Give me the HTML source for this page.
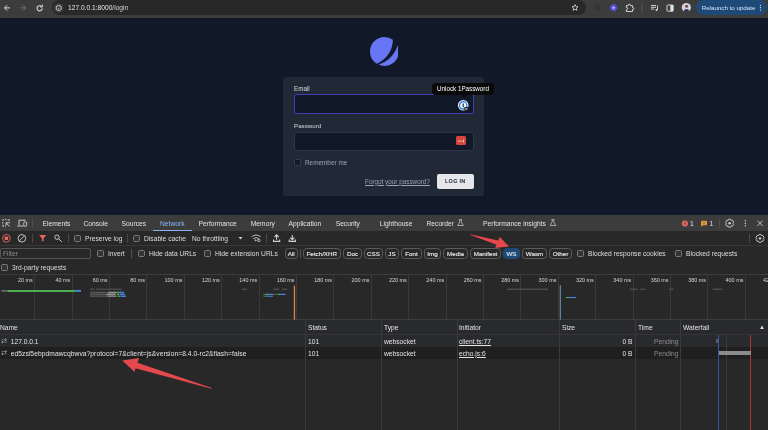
<!DOCTYPE html>
<html><head><meta charset="utf-8">
<style>
*{box-sizing:border-box;margin:0;padding:0}
html,body{width:768px;height:430px;overflow:hidden;background:#111827;font-family:"Liberation Sans",sans-serif;}
.a{position:absolute}
.t{position:absolute;white-space:nowrap;line-height:1}
#chrome{left:0;top:0;width:768px;height:17.700px;background:#3c3c3c}
#omni{left:51.500px;top:-0.500px;width:534.500px;height:15.200px;border-radius:7.600px;background:#282828}
#page{left:0;top:17.700px;width:768px;height:197.300px;background:#111827}
#card{left:283px;top:77px;width:201px;height:119px;border-radius:3px;background:#212937}
.inp{left:294px;width:180px;height:19px;border-radius:2px;background:#111827;border:1px solid #2b3544}
#dt{left:0;top:215px;width:768px;height:215px;background:#282828}
#tabs{left:0;top:215px;width:768px;height:16px;background:#3c3c3c}
.tab{font-size:6.700px;color:#e3e3e3;top:220.500px}
.lbl{font-size:6.700px;color:#dedede}
.cb{position:absolute;width:7.400px;height:7.200px;border:1px solid #7a7a7a;border-radius:1.600px;background:#333;margin-left:-0.700px}
.pill{position:absolute;top:248.200px;height:10.400px;border:1px solid #5c5c5c;border-radius:3.500px;font-size:6.250px;font-weight:normal;-webkit-text-stroke:0.150px #e6e6e6;color:#e6e6e6;text-align:center;line-height:9.100px}
.tick{font-size:5.450px;color:#d8d8d8;top:278.200px;text-align:right;width:36px}
.vl{position:absolute;top:274px;height:45px;width:1px;background:#393939}
.cell{font-size:6.700px;color:#e3e3e3}
#root{position:absolute;left:0;top:0;width:768px;height:430px;will-change:transform}
</style></head><body><div id="root">
<div class="a" id="chrome"></div>
<div class="a" id="omni"></div>
<div class="t" style="left:68px;top:4.5px;font-size:6.65px;color:#e8e8e8">127.0.0.1<span style="color:#e8e8e8">:8000</span><span style="color:#cfcfcf">/login</span></div>
<div class="a" style="left:696.300px;top:0.300px;width:70.500px;height:14.800px;border-radius:7.400px;background:#1f4a78"></div>
<div class="t" style="left:701.700px;top:4.500px;font-size:6.200px;color:#d6e6fb">Relaunch to update</div>


<svg class="a" style="left:0;top:-0.400px" width="768" height="18" viewBox="0 0 768 18">
 <g fill="none" stroke="#d8d8d8" stroke-width="0.9" stroke-linecap="round" stroke-linejoin="round">
  <path d="M9.600 7.900h-4.600M6.900 5.500l-2.400 2.400 2.400 2.400" stroke-width="1"/>
  <path d="M20.600 7.900h4.600M23.300 5.500l2.400 2.400-2.400 2.400" stroke="#707070" stroke-width="1"/>
  <path d="M41.700 6.700a2.600 2.600 0 1 0 .5 2" stroke-width="1.100"/><path d="M42.300 5v1.900h-1.900" stroke-width="1"/>
 </g>
 <circle cx="58.700" cy="7.950" r="5" fill="#3c3c3c"/>
 <circle cx="58.700" cy="7.950" r="2.600" fill="none" stroke="#e0e0e0" stroke-width="0.8"/><path d="M58.700 6.750v0.300M58.700 7.750v1.600" stroke="#e0e0e0" stroke-width="0.7"/>
 <path d="M575 4.600l.9 2 2.100.2-1.600 1.400.5 2.100-1.900-1.100-1.900 1.100.5-2.100-1.600-1.400 2.100-.2z" fill="none" stroke="#e0e0e0" stroke-width="0.8" stroke-linejoin="round"/>
 <circle cx="597.200" cy="7.600" r="3.300" fill="#363636"/>
 <circle cx="613.600" cy="7.800" r="3" fill="#5a55ea"/><circle cx="613.600" cy="7.800" r="3.300" fill="none" stroke="#5a55ea" stroke-width="1" stroke-dasharray="1.400 1.192"/><circle cx="613.600" cy="7.800" r="1.100" fill="#cfcdfa"/>
 <path d="M626.300 5.600h2.100v-.4a1 1 0 0 1 2 0v.4h2.100v1.900h.3a1 1 0 0 1 0 2h-.3v2h-6.200v-2h.4a1 1 0 0 0 0-2h-.4z" fill="none" stroke="#e0e0e0" stroke-width="0.900" stroke-linejoin="round"/>
 <rect x="641.500" y="4" width="0.700" height="8" fill="#666"/>
 <path d="M651 5.500h5M651 7.300h5M651 9.100h3M657.500 5.500v4.300" stroke="#e0e0e0" stroke-width="0.9" fill="none"/><circle cx="656.500" cy="10" r="1" fill="#e0e0e0"/>
 <rect x="667" y="5" width="6.200" height="6.200" rx="0.800" fill="none" stroke="#e0e0e0" stroke-width="0.900"/><rect x="670.300" y="5" width="2.900" height="6.200" fill="#e0e0e0"/>
 <circle cx="686.300" cy="7.600" r="4.600" fill="#d6d2dc"/><circle cx="686.600" cy="6.200" r="1.500" fill="#6b5048"/><path d="M683.500 11.200a3.200 3.200 0 0 1 6 0 4.600 4.600 0 0 1-6 0z" fill="#2f3a55"/>
 <circle cx="760.500" cy="5.300" r="0.650" fill="#d6e6fb"/><circle cx="760.500" cy="7.700" r="0.650" fill="#d6e6fb"/><circle cx="760.500" cy="10.100" r="0.650" fill="#d6e6fb"/>
</svg>
<div class="a" id="page"></div>
<svg class="a" style="left:369.600px;top:37.150px" width="28.900" height="28.900" viewBox="0 0 48 48"><path d="M11.395 44.428C4.557 40.198 0 32.632 0 24 0 10.745 10.745 0 24 0a23.891 23.891 0 0113.997 4.502c-.2 17.907-11.097 33.245-26.602 39.926z" fill="#6875F5"/><path d="M14.134 45.885A23.914 23.914 0 0024 48c13.255 0 24-10.745 24-24 0-3.516-.756-6.856-2.115-9.866-4.659 15.143-16.608 27.092-31.750 31.751z" fill="#6875F5"/></svg>
<div class="a" id="card"></div>
<div class="t" style="left:294px;top:85.500px;font-size:6.300px;color:#d6d9de">Email</div>
<div class="a inp" style="top:94.400px;height:19.200px;border:1.300px solid #433eb8"></div>
<div class="t" style="left:294px;top:122.500px;font-size:6.200px;color:#d6d9de">Password</div>
<div class="a inp" style="top:132px"></div>
<div class="cb" style="left:294.500px;top:158.500px;width:7px;height:7px;background:#111827;border-color:#374151"></div>
<div class="t" style="left:305px;top:159.500px;font-size:6.400px;color:#9ca3af">Remember me</div>
<div class="t" style="left:365px;top:178.500px;font-size:6.350px;color:#9ca3af;text-decoration:underline">Forgot your password?</div>
<div class="a" style="left:437px;top:174px;width:37px;height:15px;border-radius:2px;background:#e5e7eb"></div>
<div class="t" style="left:445px;top:179px;font-size:5.500px;font-weight:bold;color:#1f2937;letter-spacing:0.250px">LOG IN</div>
<div class="a" style="left:431.500px;top:83px;width:62.500px;height:12.300px;border-radius:4px;background:#0a0a0a"></div><div class="a" style="left:462.300px;top:93.300px;width:4px;height:4px;background:#0a0a0a;transform:rotate(45deg)"></div>
<div class="t" style="left:437px;top:86px;font-size:6.270px;color:#fff">Unlock 1Password</div>
<svg class="a" style="left:457px;top:98.500px" width="13" height="13" viewBox="0 0 13 13"><circle cx="6.200" cy="6.300" r="5.300" fill="#f2f5fa"/><circle cx="6.200" cy="6.300" r="3.700" fill="none" stroke="#2f7be0" stroke-width="1.300"/><rect x="5.600" y="4.300" width="1.200" height="4" rx="0.600" fill="#1a2a44"/><rect x="7.300" y="8" width="4" height="3.500" rx="0.700" fill="#2a2d33"/><rect x="8.300" y="9.300" width="2" height="1.200" fill="#cfd3da"/></svg>
<div class="a" style="left:456.300px;top:136.300px;width:9.400px;height:9.200px;border-radius:1.500px;background:#d6453b"></div><svg class="a" style="left:456px;top:136px" width="10" height="10" viewBox="0 0 10 10"><circle cx="2.600" cy="5" r="0.600" fill="#fff"/><circle cx="4.300" cy="5" r="0.600" fill="#fff"/><circle cx="6" cy="5" r="0.600" fill="#fff"/><rect x="7.200" y="3.500" width="0.600" height="3" fill="#fff"/></svg>

<div class="a" id="dt"></div>
<div class="a" id="tabs"></div>
<div class="t tab" style="left:42.500px">Elements</div>
<div class="t tab" style="left:83.400px">Console</div>
<div class="t tab" style="left:121.600px">Sources</div>
<div class="t tab" style="left:160px;color:#8ab4f8">Network</div>
<div class="a" style="left:153px;top:229.800px;width:39px;height:1.200px;background:#8ab4f8"></div>
<div class="t tab" style="left:198.500px">Performance</div>
<div class="t tab" style="left:250.800px">Memory</div>
<div class="t tab" style="left:288.500px">Application</div>
<div class="t tab" style="left:335.700px">Security</div>
<div class="t tab" style="left:379.700px">Lighthouse</div>
<div class="t tab" style="left:426.500px">Recorder</div>
<div class="t tab" style="left:483px">Performance insights</div>
<div class="t tab" style="left:690px">1</div>
<div class="t tab" style="left:709.500px">1</div>

<!-- toolbar row -->
<div class="a" style="left:0;top:245px;width:768px;height:1px;background:#383838"></div>
<svg class="a" style="left:0;top:215px" width="768" height="60" viewBox="0 215 768 60">
 <g fill="none" stroke="#cfcfcf" stroke-width="0.900">
  <path d="M2.800 219.700h1.200M5 219.700h1.600M7.600 219.700h1.700v1.200M9.300 222v1.200M2.800 219.700v1.200M2.800 222v1.600M2.800 224.600v1.600h1.200M5 226.200h1"/>
  <path d="M9.600 226.400l-3.400-3.400M6 225.500v-2.700h2.700" stroke-width="1"/>
  <path d="M19 225v-4.800h6.500M17.300 226h6.200" stroke-width="1"/><rect x="23.800" y="222" width="2.900" height="4.200" rx="0.600" stroke-width="0.900"/>
 </g>
 <rect x="32" y="218.600" width="0.800" height="9" fill="#525252"/>
 <circle cx="6.400" cy="238.300" r="3.900" fill="none" stroke="#e46962" stroke-width="0.900"/><rect x="4.600" y="236.500" width="3.600" height="3.600" rx="0.800" fill="#e46962"/>
 <circle cx="21.900" cy="238.300" r="3.800" fill="none" stroke="#d0d0d0" stroke-width="0.900"/><path d="M19.300 240.900l5.200-5.200" stroke="#d0d0d0" stroke-width="0.900"/>
 <rect x="32" y="234" width="0.800" height="8.700" fill="#525252"/>
 <path d="M39.200 235.100h7.100l-2.800 3.300v2.900h-1.500v-2.900z" fill="#e46962"/>
 <circle cx="57" cy="237.200" r="2.200" fill="none" stroke="#d0d0d0" stroke-width="0.900"/><path d="M58.600 238.800l3.200 3" stroke="#d0d0d0" stroke-width="1"/>
 <rect x="68.200" y="234" width="0.800" height="8.700" fill="#525252"/>
 <rect x="127.300" y="234" width="0.800" height="8.700" fill="#525252"/>
 <path d="M238.500 236.900h4l-2 2.600z" fill="#d0d0d0"/>
 <g fill="none" stroke="#d0d0d0" stroke-width="0.900"><path d="M251.600 236.800q4.500-3.600 9 0M253.300 238.700q2.800-2.200 5.600 0"/><circle cx="255.700" cy="240.300" r="0.500" fill="#d0d0d0"/><circle cx="258.800" cy="240.400" r="1.200"/></g>
 <rect x="266" y="234" width="0.800" height="8.700" fill="#525252"/>
 <g fill="none" stroke="#d0d0d0" stroke-width="1.100"><path d="M276.600 239.800v-4.800M274.500 237l2.100-2.100 2.100 2.100M273.500 239.600v1.800h6.200v-1.800"/><path d="M292.300 234.900v4.800M290.200 237.700l2.100 2.100 2.100-2.100M289.200 239.600v1.800h6.200v-1.800"/></g>
 <rect x="749.200" y="234" width="0.800" height="8.700" fill="#525252"/>
 <polygon points="761.06,234.44 758.94,234.44 758.40,235.63 757.10,235.50 756.04,237.34 756.80,238.40 756.04,239.46 757.10,241.30 758.40,241.17 758.94,242.36 761.06,242.36 761.60,241.17 762.90,241.30 763.96,239.46 763.20,238.40 763.96,237.34 762.90,235.50 761.60,235.63" fill="none" stroke="#d0d0d0" stroke-width="0.900" stroke-linejoin="round"/><circle cx="760" cy="238.4" r="1.200" fill="#d0d0d0"/>
 <circle cx="684.900" cy="223.500" r="3.100" fill="#e46962"/><path d="M683.700 222.300l2.400 2.400M686.100 222.300l-2.400 2.400" stroke="#3c3c3c" stroke-width="0.700"/>
 <path d="M701 220.700h6v4.500h-3.700l-2.300 1.600z" fill="#e8933d"/><rect x="703.700" y="221.700" width="0.600" height="1.600" fill="#3c3c3c"/><rect x="703.700" y="223.700" width="0.600" height="0.600" fill="#3c3c3c"/>
 <rect x="719.200" y="219" width="0.800" height="8.500" fill="#525252"/>
 <polygon points="730.66,219.24 728.54,219.24 728.00,220.43 726.70,220.30 725.64,222.14 726.40,223.20 725.64,224.26 726.70,226.10 728.00,225.97 728.54,227.16 730.66,227.16 731.20,225.97 732.50,226.10 733.56,224.26 732.80,223.20 733.56,222.14 732.50,220.30 731.20,220.43" fill="none" stroke="#d0d0d0" stroke-width="0.900" stroke-linejoin="round"/><circle cx="729.6" cy="223.2" r="1.200" fill="#d0d0d0"/>
 <circle cx="745.300" cy="220.700" r="0.700" fill="#d0d0d0"/><circle cx="745.300" cy="223.200" r="0.700" fill="#d0d0d0"/><circle cx="745.300" cy="225.800" r="0.700" fill="#d0d0d0"/>
 <path d="M757.300 220.500l5.400 5.400M762.700 220.500l-5.400 5.400" stroke="#d0d0d0" stroke-width="0.900"/>
 <g fill="none" stroke="#d0d0d0" stroke-width="0.700"><path d="M459 219.700h3M459.700 219.700v2.300l-2 3.500h5.600l-2-3.500v-2.300"/><path d="M551.500 219.700h3M552.200 219.700v2.300l-2 3.500h5.600l-2-3.500v-2.300"/></g>
</svg>
<div class="cb" style="left:74.5px;top:235.2px"></div><div class="t lbl" style="left:85px;top:235.7px">Preserve log</div>
<div class="cb" style="left:133.5px;top:235.2px"></div><div class="t lbl" style="left:144px;top:235.7px">Disable cache</div>
<div class="t lbl" style="left:192px;top:235.7px">No throttling</div>
<!-- filter row -->
<div class="a" style="left:0;top:248px;width:91px;height:11px;border:1px solid #555;border-radius:2px;background:#282828"></div>
<div class="t lbl" style="left:3px;top:250.7px;color:#8a8a8a">Filter</div>
<div class="cb" style="left:97.5px;top:250.2px"></div><div class="t lbl" style="left:108px;top:250.7px">Invert</div>
<div class="a" style="left:131px;top:249px;width:1px;height:9px;background:#555"></div>
<div class="cb" style="left:138.5px;top:250.2px"></div><div class="t lbl" style="left:149px;top:250.7px">Hide data URLs</div>
<div class="cb" style="left:204.5px;top:250.2px"></div><div class="t lbl" style="left:215px;top:250.7px">Hide extension URLs</div>
<div class="pill" style="left:284.600px;width:13.400px">All</div>
<div class="a" style="left:300px;top:249px;width:0.800px;height:9px;background:#555"></div>
<div class="pill" style="left:302.800px;width:38px">Fetch/XHR</div>
<div class="pill" style="left:343px;width:19px">Doc</div>
<div class="pill" style="left:364px;width:19px">CSS</div>
<div class="pill" style="left:385px;width:14px">JS</div>
<div class="pill" style="left:401px;width:21px">Font</div>
<div class="pill" style="left:424px;width:17px">Img</div>
<div class="pill" style="left:443px;width:25px">Media</div>
<div class="pill" style="left:470px;width:31px">Manifest</div>
<div class="pill" style="left:503px;width:17px;background:#1f4a78;border-color:#1f4a78;color:#d6e6fb;border-radius:4px">WS</div>
<div class="pill" style="left:522px;width:25px">Wasm</div>
<div class="pill" style="left:549px;width:23px">Other</div>
<div class="cb" style="left:577.5px;top:250.2px"></div><div class="t lbl" style="left:588px;top:250.7px">Blocked response cookies</div>
<div class="cb" style="left:675.5px;top:250.2px"></div><div class="t lbl" style="left:686px;top:250.7px">Blocked requests</div>
<div class="cb" style="left:1.5px;top:264.2px"></div><div class="t lbl" style="left:12px;top:264.7px">3rd-party requests</div>
<!-- timeline -->
<div class="a" style="left:0;top:274px;width:768px;height:1px;background:#3d3d3d"></div>
<div class="a" style="left:0;top:319px;width:768px;height:1px;background:#3d3d3d"></div>
<div id="tl">
<div class="vl" style="left:34.2px"></div><div class="t tick" style="left:-3.2px">20 ms</div>
<div class="vl" style="left:71.6px"></div><div class="t tick" style="left:34.2px">40 ms</div>
<div class="vl" style="left:109.0px"></div><div class="t tick" style="left:71.6px">60 ms</div>
<div class="vl" style="left:146.4px"></div><div class="t tick" style="left:109.0px">80 ms</div>
<div class="vl" style="left:183.8px"></div><div class="t tick" style="left:146.4px">100 ms</div>
<div class="vl" style="left:221.2px"></div><div class="t tick" style="left:183.8px">120 ms</div>
<div class="vl" style="left:258.6px"></div><div class="t tick" style="left:221.2px">140 ms</div>
<div class="vl" style="left:296.0px"></div><div class="t tick" style="left:258.6px">160 ms</div>
<div class="vl" style="left:333.4px"></div><div class="t tick" style="left:296.0px">180 ms</div>
<div class="vl" style="left:370.8px"></div><div class="t tick" style="left:333.4px">200 ms</div>
<div class="vl" style="left:408.2px"></div><div class="t tick" style="left:370.8px">220 ms</div>
<div class="vl" style="left:445.6px"></div><div class="t tick" style="left:408.2px">240 ms</div>
<div class="vl" style="left:483.0px"></div><div class="t tick" style="left:445.6px">260 ms</div>
<div class="vl" style="left:520.4px"></div><div class="t tick" style="left:483.0px">280 ms</div>
<div class="vl" style="left:557.8px"></div><div class="t tick" style="left:520.4px">300 ms</div>
<div class="vl" style="left:595.2px"></div><div class="t tick" style="left:557.8px">320 ms</div>
<div class="vl" style="left:632.6px"></div><div class="t tick" style="left:595.2px">340 ms</div>
<div class="vl" style="left:670.0px"></div><div class="t tick" style="left:632.6px">360 ms</div>
<div class="vl" style="left:707.4px"></div><div class="t tick" style="left:670.0px">380 ms</div>
<div class="vl" style="left:744.8px"></div><div class="t tick" style="left:707.4px">400 ms</div>
<div class="t tick" style="left:744.8px">420 ms</div>
</div>

<svg class="a" style="left:0;top:270px" width="768" height="52" viewBox="0 270 768 52">
 <g stroke-width="0.8" fill="none">
  <path d="M1.300 290.900h5.400" stroke="#8a8a8a" stroke-width="1.200"/><path d="M7.300 290.900h68" stroke="#4caf50" stroke-width="2"/><path d="M75.300 290.900h5.700" stroke="#4a7fe0" stroke-width="2"/>
  <path d="M90 289.200h4.800M95.800 289.200h26" stroke="#666"/>
  <path d="M90 292.500h18.300M90 294.400h16.300M90 296.200h17.300" stroke="#585858" stroke-width="1.300"/>
  <path d="M108.300 292.500h8.400M106.300 294.400h9.300M107.300 296.200h9.400" stroke="#9a9a9a" stroke-width="1.300"/>
  <path d="M116.700 292.500h2.100M117 294.400h2.200M117.700 296.200h2.100" stroke="#4caf50" stroke-width="1.400"/>
  <path d="M118.800 292.500h5.200M119.800 294.400h5.200M120.400 296.200h5.600" stroke="#4a7fe0" stroke-width="1.400"/>
  <path d="M241.900 289.200h4.800M273.300 289.200h5.700M282 289.200h5.300" stroke="#6a6a6a"/>
  <path d="M263.300 294.400h2.500M263.300 296.200h2.500M273.300 294.400h4" stroke="#7a7a7a"/>
  <path d="M265.800 294.400h2.200M265.800 296.200h1.700M278 294.400h2" stroke="#4caf50" stroke-width="1.100"/>
  <path d="M268 294.400h5.300M267.500 296.200h5.500M280 294.400h5.600" stroke="#4a7fe0" stroke-width="1.100"/>
  <path d="M507.400 289.200h40.500M630 289.200h7.700M640.200 289.200h4.800M669 289.200h4.500M712.600 289.200h10" stroke="#6a6a6a"/>
  <path d="M566 297.500h3" stroke="#4caf50" stroke-width="1.100"/><path d="M569 297.500h7" stroke="#4a7fe0" stroke-width="1.100"/>
 </g>
 <rect x="293.800" y="285.600" width="1.300" height="34" fill="#d9834f"/>
 <rect x="559.800" y="285.200" width="0.900" height="34.400" fill="#6fa8dc"/>
</svg>
<!-- table -->
<div class="a" style="left:0;top:320px;width:768px;height:27px;background:#292a2d"></div>
<div class="a" style="left:0;top:347px;width:768px;height:12px;background:#1f1f1f"></div>
<div class="a" style="left:0;top:334px;width:768px;height:1px;background:#353535"></div>
<div id="cols">
<div class="a" style="left:304.5px;top:320px;width:1px;height:110px;background:#3a3a3a"></div>
<div class="a" style="left:380.5px;top:320px;width:1px;height:110px;background:#3a3a3a"></div>
<div class="a" style="left:456.5px;top:320px;width:1px;height:110px;background:#3a3a3a"></div>
<div class="a" style="left:558.5px;top:320px;width:1px;height:110px;background:#3a3a3a"></div>
<div class="a" style="left:634.5px;top:320px;width:1px;height:110px;background:#3a3a3a"></div>
<div class="a" style="left:679.5px;top:320px;width:1px;height:110px;background:#3a3a3a"></div>
</div>
<div class="t cell" style="left:0;top:324.800px">Name</div>
<div class="t cell" style="left:308px;top:324.5px">Status</div>
<div class="t cell" style="left:384px;top:324.5px">Type</div>
<div class="t cell" style="left:459px;top:324.5px">Initiator</div>
<div class="t cell" style="left:562px;top:324.5px">Size</div>
<div class="t cell" style="left:638px;top:324.5px">Time</div>
<div class="t cell" style="left:683px;top:324.5px">Waterfall</div>
<div class="t cell" style="left:759px;top:324.300px;font-size:6px">&#9650;</div>
<div class="t cell" style="left:10.700px;top:338.5px">127.0.0.1</div>
<div class="t cell" style="left:308px;top:338.5px">101</div>
<div class="t cell" style="left:384px;top:338.5px">websocket</div>
<div class="t cell" style="left:459px;top:338.5px;text-decoration:underline">client.ts:77</div>
<div class="t cell" style="left:612.600px;top:338.5px;width:20px;text-align:right">0 B</div>
<div class="t cell" style="left:654px;top:338.5px;color:#8a8a8a">Pending</div>
<div class="t cell" style="left:10.700px;top:350.5px;letter-spacing:0.058px">ed5zsi5ebpdmawcqbwva?protocol=7&amp;client=js&amp;version=8.4.0-rc2&amp;flash=false</div>
<div class="t cell" style="left:308px;top:350.5px">101</div>
<div class="t cell" style="left:384px;top:350.5px">websocket</div>
<div class="t cell" style="left:459px;top:350.5px;text-decoration:underline">echo.js:6</div>
<div class="t cell" style="left:612.600px;top:350.5px;width:20px;text-align:right">0 B</div>
<div class="t cell" style="left:654px;top:350.5px;color:#8a8a8a">Pending</div>
<svg class="a" style="left:0;top:334px" width="10" height="26" viewBox="0 334 10 26"><g fill="none" stroke-width="0.700">
<path d="M1.600 339.700h4" stroke="#8a8a8a"/><path d="M5.200 338.600l1.300 1.100-1.300 1.100" stroke="#e0e0e0"/><path d="M7 342.100h-4" stroke="#8a8a8a"/><path d="M3 341l-1.300 1.100 1.300 1.100" stroke="#e0e0e0"/>
<path d="M1.600 351.500h4" stroke="#8a8a8a"/><path d="M5.200 350.400l1.300 1.100-1.300 1.100" stroke="#e0e0e0"/><path d="M7 353.900h-4" stroke="#8a8a8a"/><path d="M3 352.800l-1.300 1.100 1.300 1.100" stroke="#e0e0e0"/>
</g></svg>
<div class="a" style="left:717.700px;top:335px;width:1px;height:95px;background:#3557a0"></div>
<div class="a" style="left:750.200px;top:335px;width:1px;height:95px;background:#a83838"></div>
<div class="a" style="left:726px;top:335px;width:1px;height:95px;background:#3a3a3a"></div>
<div class="a" style="left:719px;top:350.700px;width:31.500px;height:4px;background:#8c8c8c"></div>
<div class="a" style="left:716.200px;top:338.800px;width:1.600px;height:4px;background:#5c5c5c"></div>
<svg class="a" style="left:0;top:0" width="768" height="430" viewBox="0 0 768 430">
 <polygon points="122.200,360.600 139.200,357.900 137.400,362.800 211.800,388 211.500,388.700 135.500,368.300 134.600,371.900" fill="#e5484d"/>
 <polygon points="470.100,234.200 470,234.700 496.500,244.800 495.100,248.100 509,246.400 499.800,237 498.200,240.600" fill="#e5484d"/>
</svg>
</div></body></html>
